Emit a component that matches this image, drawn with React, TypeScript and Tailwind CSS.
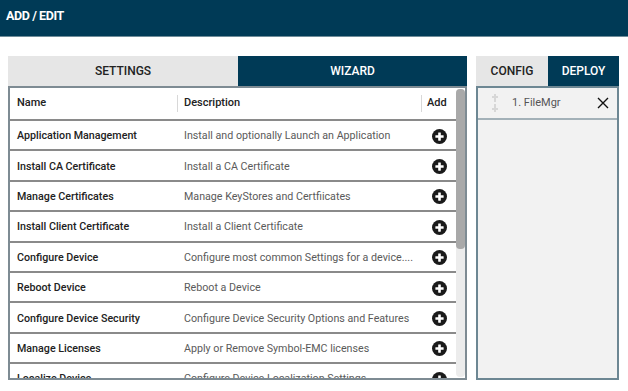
import React from 'react';

const rows = [
  { name: 'Application Management', desc: 'Install and optionally Launch an Application' },
  { name: 'Install CA Certificate', desc: 'Install a CA Certificate' },
  { name: 'Manage Certificates', desc: 'Manage KeyStores and Certfiicates' },
  { name: 'Install Client Certificate', desc: 'Install a Client Certificate' },
  { name: 'Configure Device', desc: 'Configure most common Settings for a device....' },
  { name: 'Reboot Device', desc: 'Reboot a Device' },
  { name: 'Configure Device Security', desc: 'Configure Device Security Options and Features' },
  { name: 'Manage Licenses', desc: 'Apply or Remove Symbol-EMC licenses' },
  { name: 'Localize Device', desc: 'Configure Device Localization Settings' },
];

function PlusCircle() {
  return (
    <svg width="15" height="15" viewBox="0 0 16 16">
      <circle cx="8" cy="8" r="8" fill="#1a1a1a" />
      <rect x="3.6" y="6.6" width="8.8" height="2.8" rx="0.4" fill="#fff" />
      <rect x="6.6" y="3.6" width="2.8" height="8.8" rx="0.4" fill="#fff" />
    </svg>
  );
}

function DragHandle() {
  const dots: [number, number][] = [
    [5, 1], [3, 3], [5, 3], [7, 3], [5, 5], [5, 7],
    [5, 11], [5, 13], [3, 15], [5, 15], [7, 15], [5, 17],
  ];
  return (
    <svg width="10" height="19" viewBox="0 0 10 19">
      {dots.map(([x, y], i) => (
        <circle key={i} cx={x} cy={y} r="0.8" fill="#b5b5b5" />
      ))}
    </svg>
  );
}

export default function App() {
  return (
    <div className="w-[628px] h-[391px] bg-white overflow-hidden font-['Roboto',sans-serif]">
      <div className="h-[37px] bg-[#003a56] flex items-start pt-[7px] px-[6px] border-b border-[#6f8c99]">
        <span className="text-white text-[12.5px] font-bold tracking-[-0.4px]">ADD / EDIT</span>
      </div>

      <div className="flex gap-[9px] pl-[8px] pt-[19px]">
        {/* left panel */}
        <div className="w-[459px] flex flex-col">
          <div className="flex h-[30px]">
            <div className="w-[230px] bg-[#e6e6e6] flex items-center justify-center text-[12px] font-medium text-[#222]">
              SETTINGS
            </div>
            <div className="flex-1 bg-[#003a56] flex items-center justify-center text-[12px] font-medium text-white">
              WIZARD
            </div>
          </div>
          <div className="h-[294px] border-2 border-[#7e8b93] bg-white flex overflow-hidden">
            <div className="flex-1 flex flex-col">
              <div className="h-[33px] shrink-0 flex items-center border-b-2 border-[#8a8a8a] text-[11px] font-medium text-[#222] pb-[1px]">
                <div className="w-[167px] pl-[7px]">Name</div>
                <div className="w-[244px] flex items-center">
                  <span className="w-px h-[17px] bg-[#d8d8d8]" />
                  <span className="pl-[6px]">Description</span>
                </div>
                <div className="flex-1 flex items-center">
                  <span className="w-px h-[17px] bg-[#d8d8d8]" />
                  <span className="pl-[5px]">Add</span>
                </div>
              </div>
              {rows.map((r) => (
                <div
                  key={r.name}
                  className="h-[30.4px] shrink-0 flex items-center border-b-2 border-[#8a8a8a] pt-[2px] text-[10.7px]"
                >
                  <div className="w-[167px] pl-[7px] font-medium text-[#222] whitespace-nowrap">{r.name}</div>
                  <div className="w-[244px] pl-[7px] text-[#5a5a5a] whitespace-nowrap">{r.desc}</div>
                  <div className="flex-1 flex justify-center pl-[2px]">
                    <PlusCircle />
                  </div>
                </div>
              ))}
            </div>
            <div className="w-[9px] bg-[#ececec] rounded-[4px] my-[1px] flex flex-col">
              <div className="h-[160px] bg-[#a9a9a9] rounded-[4px]" />
            </div>
          </div>
        </div>

        {/* right panel */}
        <div className="w-[143px] flex flex-col">
          <div className="flex h-[30px]">
            <div className="w-[72px] bg-[#e6e6e6] flex items-center justify-center text-[12px] font-medium text-[#222]">
              CONFIG
            </div>
            <div className="flex-1 bg-[#003a56] flex items-center justify-center text-[12px] font-medium text-white">
              DEPLOY
            </div>
          </div>
          <div className="h-[294px] border-2 border-[#6d8793] bg-[#f2f2f2]">
            <div className="h-[32px] flex items-center border-b-2 border-[#a3b1b8] pl-[12px] pr-[8px]">
              <DragHandle />
              <span className="ml-[12px] text-[11px] text-[#555] flex-1">1. FileMgr</span>
              <svg width="12" height="12" viewBox="0 0 12 12">
                <path d="M1 1L11 11M11 1L1 11" stroke="#111" strokeWidth="1.4" />
              </svg>
            </div>
          </div>
        </div>
      </div>
    </div>
  );
}
